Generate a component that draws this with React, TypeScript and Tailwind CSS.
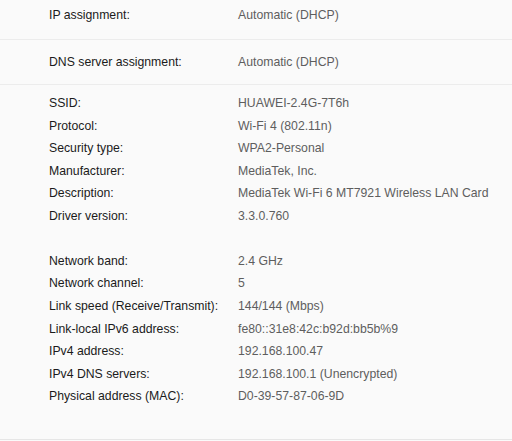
type Row = [string, string];

const wifi: Row[] = [
  ["SSID:", "HUAWEI-2.4G-7T6h"],
  ["Protocol:", "Wi-Fi 4 (802.11n)"],
  ["Security type:", "WPA2-Personal"],
  ["Manufacturer:", "MediaTek, Inc."],
  ["Description:", "MediaTek Wi-Fi 6 MT7921 Wireless LAN Card"],
  ["Driver version:", "3.3.0.760"],
];

const net: Row[] = [
  ["Network band:", "2.4 GHz"],
  ["Network channel:", "5"],
  ["Link speed (Receive/Transmit):", "144/144 (Mbps)"],
  ["Link-local IPv6 address:", "fe80::31e8:42c:b92d:bb5b%9"],
  ["IPv4 address:", "192.168.100.47"],
  ["IPv4 DNS servers:", "192.168.100.1 (Unencrypted)"],
  ["Physical address (MAC):", "D0-39-57-87-06-9D"],
];

function PropRow({ label, value }: { label: string; value: string }) {
  return (
    <div className="flex h-[22.55px] items-center">
      <div className="w-[189px] shrink-0 text-[#1b1b1b]">{label}</div>
      <div className="text-[#5e5e5e]">{value}</div>
    </div>
  );
}

export default function App() {
  return (
    <div
      className="w-[512px] h-[441px] overflow-hidden bg-[#fafafa] text-[12.25px]"
      style={{ fontFamily: '"Liberation Sans", Arial, sans-serif' }}
    >
      <div className="h-[40px] border-b border-[#ececec] pl-[49px] pt-[4px]">
        <PropRow label="IP assignment:" value="Automatic (DHCP)" />
      </div>
      <div className="h-[45px] border-b border-[#ececec] pl-[49px] flex items-center">
        <div className="w-full">
          <PropRow label="DNS server assignment:" value="Automatic (DHCP)" />
        </div>
      </div>
      <div className="h-[355px] border-b border-[#e6e6e6] pl-[49px] pt-[7px]">
        {wifi.map(([l, v]) => (
          <PropRow key={l} label={l} value={v} />
        ))}
        <div className="h-[22.55px]" />
        {net.map(([l, v]) => (
          <PropRow key={l} label={l} value={v} />
        ))}
      </div>
    </div>
  );
}
